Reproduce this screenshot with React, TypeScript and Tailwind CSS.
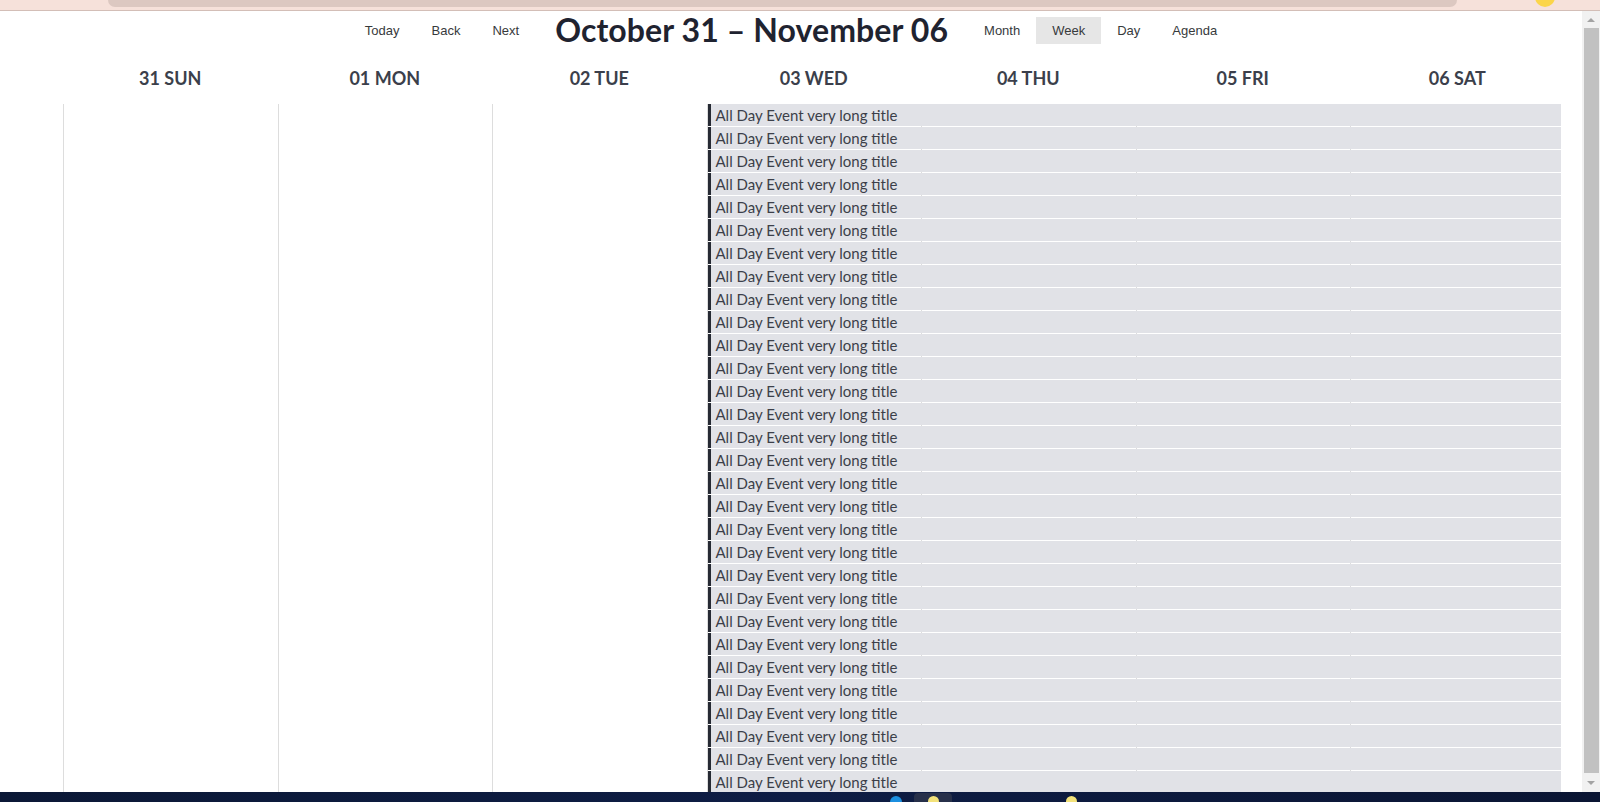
import React from 'react';

const toolbarLeft = ['Today', 'Back', 'Next'];
const views = ['Month', 'Week', 'Day', 'Agenda'];
const days = ['31 SUN', '01 MON', '02 TUE', '03 WED', '04 THU', '05 FRI', '06 SAT'];
const events = Array.from({ length: 30 }, (_, i) => i);

const ToolButton = ({ label, active }: { label: string; active?: boolean }) => (
  <button
    className={`h-[27px] px-[16px] text-[13px] leading-[15px] text-[#373a3c] ${active ? 'bg-[#e6e6e6]' : ''}`}
    style={{ fontFamily: '"Liberation Sans", Arial, sans-serif' }}
  >
    {label}
  </button>
);

const App = () => {
  return (
    <div className="w-[1600px] h-[802px] flex flex-col overflow-hidden bg-white">
      {/* browser chrome strip */}
      <div className="h-[11px] shrink-0 flex items-start bg-[#f6e1da] border-b border-[#d3beb7] overflow-hidden">
        <div className="ml-[108px] w-[1349px] h-[7px] rounded-b-[8px] bg-[#dcc8c1]" />
        <div className="ml-[78px] -mt-[13px] w-[20px] h-[20px] rounded-full bg-[#fbd54a]" />
      </div>

      <div className="flex flex-1 min-h-0">
        {/* calendar */}
        <div className="flex-1 flex flex-col min-w-0" style={{ fontFamily: 'Lato, "Noto Sans", sans-serif' }}>
          {/* Toolbar */}
          <div className="h-[38px] shrink-0 flex items-center justify-center">
            {toolbarLeft.map(l => <ToolButton key={l} label={l} />)}
            <h1 className="mx-[20px] text-[32px] leading-[36px] font-bold text-[#1f2330] tracking-[0.1px]">
              October 31 – November 06
            </h1>
            {views.map(v => <ToolButton key={v} label={v} active={v === 'Week'} />)}
          </div>

          {/* Day headers */}
          <div className="h-[55px] pt-[3px] shrink-0 grid grid-cols-[63px_repeat(7,214.5px)] items-center">
            <div />
            {days.map(d => (
              <div key={d} className="text-center text-[18px] font-bold text-[#3b3f4b]">{d}</div>
            ))}
          </div>

          {/* Body */}
          <div className="flex-1 min-h-0 overflow-hidden grid grid-cols-[63px_repeat(7,214.5px)] grid-rows-[1fr]">
            <div className="row-start-1 col-start-2 border-l border-[#dddddd]" />
            <div className="row-start-1 col-start-3 border-l border-[#dddddd]" />
            <div className="row-start-1 col-start-4 border-l border-[#dddddd]" />
            <div className="row-start-1 col-start-5 border-l border-[#dddddd]" />
            <div className="row-start-1 col-start-6 border-l border-[#dddddd]" />
            <div className="row-start-1 col-start-7 border-l border-[#dddddd]" />
            <div className="row-start-1 col-start-8 border-l border-[#dddddd]" />

            <div className="row-start-1 col-start-5 col-end-9 z-10 flex flex-col gap-[1px] ml-[1px] mr-[4px] min-h-0">
              {events.map(i => (
                <div
                  key={i}
                  className="h-[22px] shrink-0 bg-[#e1e2e7] border-l-[3px] border-[#262a33] pl-[5px] text-[15px] leading-[22px] text-[#3c3f49] whitespace-nowrap"
                >
                  All Day Event very long title
                </div>
              ))}
            </div>
          </div>
        </div>

        {/* scrollbar */}
        <div className="w-[18px] shrink-0 bg-[#f1f1f1] flex flex-col">
          <div className="h-[17px] flex items-center justify-center">
            <div className="w-0 h-0 border-x-[4px] border-x-transparent border-b-[4px] border-b-[#a3a3a3]" />
          </div>
          <div className="flex-1 ml-[2px] mr-[1px] bg-[#c1c1c1]" />
          <div className="h-[19px] flex items-center justify-center">
            <div className="w-0 h-0 border-x-[4px] border-x-transparent border-t-[4px] border-t-[#a3a3a3]" />
          </div>
        </div>
      </div>

      {/* taskbar */}
      <div className="h-[10px] shrink-0 flex items-start overflow-hidden bg-gradient-to-r from-[#0b1836] via-[#0e1d45] to-[#0a1533]">
        <div className="ml-[890px] mt-[4px] w-[12px] h-[12px] rounded-full bg-[#1b8fe0]" />
        <div className="ml-[12px] mt-[1px] w-[38px] h-[14px] rounded-t-[4px] bg-[#27304a] flex justify-center">
          <div className="mt-[3px] w-[11px] h-[11px] rounded-full bg-[#f3e27a]" />
        </div>
        <div className="ml-[114px] mt-[4px] w-[11px] h-[11px] rounded-full bg-[#f3e27a]" />
      </div>
    </div>
  );
};

export default App;
